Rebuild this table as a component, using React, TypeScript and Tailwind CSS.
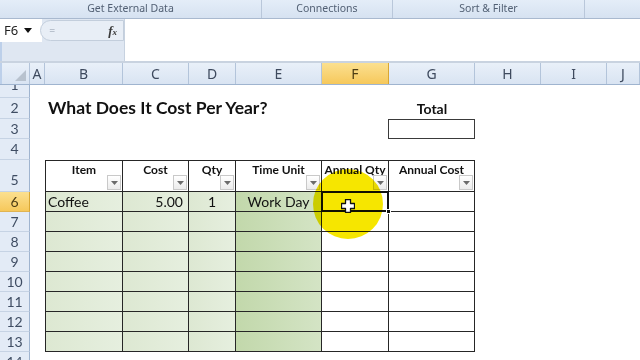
import React from "react";

const GRID = "grid grid-cols-[30px_15px_78px_66px_47px_86px_67px_86px_66px_66px_33px] grid-rows-[100%] leading-none";

function DropBtn() {
  return (
    <div className="absolute right-[1px] bottom-[1px] w-[14px] h-[15px] border border-[#c9c9c9] bg-gradient-to-b from-[#ffffff] to-[#ececec] flex items-center justify-center">
      <svg width="7" height="4" viewBox="0 0 7 4"><path d="M0 0 L7 0 L3.5 4 Z" fill="#6b6b6b" /></svg>
    </div>
  );
}

function RowHead({ n, active }: { n: string; active?: boolean }) {
  return (
    <div
      className={
        active
          ? "flex items-center justify-center border-r border-b border-r-[#d9a733] border-b-[#e0b452] bg-gradient-to-b from-[#fbe08f] to-[#f6c85a] text-[#4d3d14] text-[14px]"
          : "flex items-center justify-center border-r border-b border-r-[#9fb4cf] border-b-[#c6d3e4] bg-[#e3ebf6] text-[#3f4d63] text-[14px]"
      }
    >
      {n}
    </div>
  );
}

function ColHead({ l, active }: { l: string; active?: boolean }) {
  return (
    <div
      className={
        active
          ? "flex items-center justify-center border-r border-[#d9a733] bg-gradient-to-b from-[#fbe08f] to-[#f6c85a] text-[#4d3d14]"
          : "flex items-center justify-center border-r border-[#b3c4da] bg-gradient-to-b from-[#e9f0f9] to-[#d9e4f2] text-[#3e4a5e]"
      }
    >
      {l}
    </div>
  );
}

function DataRow({ n, active, children }: { n: string; active?: boolean; children?: React.ReactNode }) {
  return (
    <div className={GRID + " h-[20px]"}>
      <RowHead n={n} active={active} />
      <div />
      {children ?? (
        <>
          <div className="border-l border-r border-b border-[#262626] bg-gradient-to-r from-[#dde8d2] to-[#e6efdf]" />
          <div className="border-r border-b border-[#262626] bg-gradient-to-r from-[#dde8d2] to-[#e6efdf]" />
          <div className="border-r border-b border-[#262626] bg-gradient-to-r from-[#dde8d2] to-[#e6efdf]" />
          <div className="border-r border-b border-[#262626] bg-gradient-to-r from-[#c2d8ab] to-[#d4e4c5]" />
          <div className="border-r border-b border-[#262626] bg-white" />
          <div className="border-r border-b border-[#262626] bg-white" />
        </>
      )}
      <div />
      <div />
      <div />
    </div>
  );
}

export default function App() {
  return (
    <div className="relative w-[640px] h-[360px] overflow-hidden bg-white font-['Lato',sans-serif]">
      {/* Ribbon group labels */}
      <div className="flex h-[19px] border-b border-[#a9b9cf] bg-gradient-to-b from-[#e4edf8] to-[#d6e2f1] text-[10.5px] text-[#526074] font-['Noto_Sans',sans-serif]">
        <div className="w-[262px] flex items-center justify-center border-r border-[#b9c7da]">Get External Data</div>
        <div className="w-[131px] flex items-center justify-center border-r border-[#b9c7da]">Connections</div>
        <div className="w-[192px] flex items-center justify-center border-r border-[#b9c7da]">Sort &amp; Filter</div>
        <div className="flex-1" />
      </div>

      {/* Formula bar */}
      <div className="flex h-[44px] border-b-2 border-[#c9d3e0]">
        <div className="w-[124px] flex flex-col bg-[#dfe7f2]">
          <div className="flex h-[23px] items-center">
            <div className="w-[42px] h-full bg-white flex items-center pl-[4px] gap-[6px] text-[13px] text-[#222] font-['Noto_Sans',sans-serif]">
              <span>F6</span>
              <svg width="8" height="5" viewBox="0 0 8 5"><path d="M0 0 L8 0 L4 5 Z" fill="#111" /></svg>
            </div>
            <div className="ml-[-2px] flex-1 h-[21px] rounded-l-full border border-[#c3cedc] bg-[#e8eef6] flex items-center justify-between pl-[8px] pr-[6px]">
              <span className="text-[11px] text-[#b8c1cd]">=</span>
              <span className="font-['Liberation_Serif',serif] italic font-bold text-[13px] text-[#3a3a3a]">
                f<span className="text-[9px]">x</span>
              </span>
            </div>
          </div>
          <div className="flex-1 border-l-2 border-[#bdd0ea]" />
        </div>
        <div className="flex-1 bg-white border-l border-[#c7d2e0]" />
      </div>

      {/* Column headers */}
      <div className={GRID + " h-[22px] text-[14px] border-b border-[#9fb4cf] font-['Noto_Sans',sans-serif]"}>
        <div className="relative border-r border-[#b3c4da] bg-gradient-to-b from-[#e9f0f9] to-[#d9e4f2] border-l-2 border-l-[#bdd0ea]">
          <svg className="absolute right-[3px] bottom-[3px]" width="11" height="11" viewBox="0 0 11 11"><path d="M11 0 L11 11 L0 11 Z" fill="#b8c2ce" /></svg>
        </div>
        <ColHead l="A" />
        <ColHead l="B" />
        <ColHead l="C" />
        <ColHead l="D" />
        <ColHead l="E" />
        <ColHead l="F" active />
        <ColHead l="G" />
        <ColHead l="H" />
        <ColHead l="I" />
        <ColHead l="J" />
      </div>

      {/* Row 1 (partially scrolled) */}
      <div className={GRID + " h-[13px]"}>
        <div className="relative overflow-hidden border-r border-b border-r-[#9fb4cf] border-b-[#c6d3e4] bg-[#e3ebf6] text-[#3f4d63] text-[14px]">
          <span className="absolute left-0 right-0 top-[-7px] text-center">1</span>
        </div>
      </div>

      {/* Row 2 */}
      <div className={GRID + " h-[21px]"}>
        <RowHead n="2" />
        <div />
        <div className="relative col-span-4">
          <span className="absolute left-[3px] top-[-1px] whitespace-nowrap leading-[21px] text-[17.5px] font-bold text-[#111]">What Does It Cost Per Year?</span>
        </div>
        <div />
        <div className="flex items-end justify-center pb-[3px] text-[14px] font-bold text-[#111]">Total</div>
      </div>

      {/* Row 3 */}
      <div className={GRID + " h-[20px]"}>
        <RowHead n="3" />
        <div />
        <div />
        <div />
        <div />
        <div />
        <div />
        <div className="border border-[#3a3a3a] ml-[-1px]" />
      </div>

      {/* Row 4 */}
      <div className={GRID + " h-[21px]"}>
        <RowHead n="4" />
      </div>

      {/* Row 5: table header */}
      <div className={GRID + " h-[32px] text-[12px] font-bold text-[#111]"}>
        <div className="flex items-end justify-center pb-[4px] border-r border-b border-r-[#9fb4cf] border-b-[#c6d3e4] bg-[#e3ebf6] text-[#3f4d63] text-[14px] font-normal">5</div>
        <div />
        <div className="relative border-l border-t border-r border-b border-[#262626] text-center pt-[3px]">Item<DropBtn /></div>
        <div className="relative border-t border-r border-b border-[#262626] text-center pt-[3px]">Cost<DropBtn /></div>
        <div className="relative border-t border-r border-b border-[#262626] text-center pt-[3px]">Qty<DropBtn /></div>
        <div className="relative border-t border-r border-b border-[#262626] text-center pt-[3px]">Time Unit<DropBtn /></div>
        <div className="relative border-t border-r border-b border-[#262626] text-center pt-[3px]">Annual Qty<DropBtn /></div>
        <div className="relative border-t border-r border-b border-[#262626] text-center pt-[3px]">Annual Cost<DropBtn /></div>
      </div>

      {/* Row 6: data */}
      <DataRow n="6" active>
        <>
          <div className="flex items-center pl-[2px] border-l border-r border-b border-[#262626] bg-gradient-to-r from-[#dde8d2] to-[#e6efdf] text-[14px] text-[#111]">Coffee</div>
          <div className="flex items-center justify-end pr-[5px] border-r border-b border-[#262626] bg-gradient-to-r from-[#dde8d2] to-[#e6efdf] text-[14px] text-[#111]">5.00</div>
          <div className="flex items-center justify-center border-r border-b border-[#262626] bg-gradient-to-r from-[#dde8d2] to-[#e6efdf] text-[14px] text-[#111]">1</div>
          <div className="flex items-center justify-center border-r border-b border-[#262626] bg-gradient-to-r from-[#c2d8ab] to-[#d4e4c5] text-[14px] text-[#111]">Work Day</div>
          <div className="relative border-r border-b border-[#262626] bg-white">
            <div className="absolute left-[-1px] top-[-1px] right-[-1px] bottom-[-1px] border-2 border-[#111]" />
            <div className="absolute right-[-3px] bottom-[-3px] w-[5px] h-[5px] bg-[#111] border border-white" />
          </div>
          <div className="border-r border-b border-[#262626] bg-white" />
        </>
      </DataRow>
      <DataRow n="7" />
      <DataRow n="8" />
      <DataRow n="9" />
      <DataRow n="10" />
      <DataRow n="11" />
      <DataRow n="12" />
      <DataRow n="13" />
      <div className={GRID + " h-[20px]"}>
        <div className="relative overflow-hidden border-r border-r-[#9fb4cf] bg-[#e3ebf6] text-[#3f4d63] text-[14px]">
          <span className="absolute left-0 right-0 top-[3px] text-center">14</span>
        </div>
      </div>

      {/* Cursor highlight */}
      <div className="absolute left-[313px] top-[169px] w-[70px] h-[70px] rounded-full bg-[#f6e600] mix-blend-multiply" />
      <svg className="absolute left-[341px] top-[199px]" width="14" height="14" viewBox="0 0 14 14">
        <path d="M4.5 0.5 H9.5 V4.5 H13.5 V9.5 H9.5 V13.5 H4.5 V9.5 H0.5 V4.5 H4.5 Z" fill="#fff" stroke="#111" strokeWidth="1.3" strokeLinejoin="round" />
      </svg>
    </div>
  );
}
